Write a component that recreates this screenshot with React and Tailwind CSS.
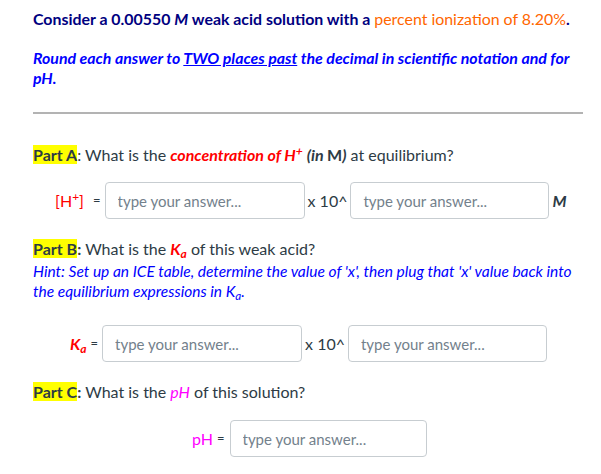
import React from 'react';

function Answer({ className = '' }) {
  return (
    <input
      type="text"
      placeholder="type your answer..."
      className={`h-[37px] rounded-[4px] border border-[#c7cdd1] bg-white px-3 text-[15px] text-[#2d3b45] placeholder:text-[#73818c] ${className}`}
    />
  );
}

function App() {
  return (
    <div className="min-h-[474px] bg-white pl-[33px] pr-[18px] pt-[9px] font-['Lato',sans-serif] text-[16px] text-[#2d3b45]">
      {/* Enunciado */}
      <p className="text-[15.9px] font-bold text-[#000080] leading-[20px]">
        Consider a 0.00550 <i>M</i> weak acid solution with a{' '}
        <span className="font-normal text-[#ff6600]">percent ionization of 8.20%</span>.
      </p>
      <p className="mt-[19px] text-[15.9px] font-bold italic text-[#0000ff] leading-[20px]">
        Round each answer to <u>TWO places past</u> the decimal in scientific notation and for pH.
      </p>

      <hr className="mt-[24px] border-t-2 border-[#b3b3b3]" />

      {/* Parte A */}
      <p className="mt-[31px] leading-[20px]">
        <span className="bg-[#ffff00] font-bold">Part A</span>: What is the{' '}
        <span className="font-bold italic text-[#ff0000]">concentration of H<sup>+</sup></span>{' '}
        <i className="font-bold">(in </i><b>M</b><i className="font-bold">)</i> at equilibrium?
      </p>
      <div className="mt-[17px] flex items-center pl-[22px]">
        <span className="text-[#ff0000]">[H<sup>+</sup>]</span>
        <span className="ml-[9px] mr-[4px] text-[13px]">=</span>
        <Answer className="w-[200px]" />
        <span className="mx-[3px]">x 10^</span>
        <Answer className="w-[199px]" />
        <span className="ml-[3px] font-bold italic">M</span>
      </div>

      {/* Parte B */}
      <p className="mt-[20px] leading-[20px]">
        <span className="bg-[#ffff00] font-bold">Part B</span>
        <b>:</b> What is the{' '}
        <span className="font-bold italic text-[#ff0000]">
          K<sub>a</sub>
        </span>{' '}
        of this weak acid?
      </p>
      <p className="mt-[2px] text-[15.5px] italic text-[#0000ff] leading-[20px]">
        Hint: Set up an ICE table, determine the value of 'x', then plug that 'x' value back into the
        equilibrium expressions in K<sub>a</sub>.
      </p>
      <div className="mt-[24px] flex items-center pl-[37px]">
        <span className="font-bold italic text-[#ff0000]">
          K<sub>a</sub>
        </span>
        <span className="ml-[4px] mr-[4px] text-[13px]">=</span>
        <Answer className="w-[200px]" />
        <span className="mx-[3px]">x 10^</span>
        <Answer className="w-[199px]" />
      </div>

      {/* Parte C */}
      <p className="mt-[20px] leading-[20px]">
        <span className="bg-[#ffff00] font-bold">Part C</span>
        <b>:</b> What is the <i className="text-[#ff00ff]">pH</i> of this solution?
      </p>
      <div className="mt-[18px] flex items-center pl-[159px]">
        <span className="text-[#ff00ff]">pH</span>
        <span className="ml-[4px] mr-[5px] text-[13px]">=</span>
        <Answer className="w-[197px]" />
      </div>
    </div>
  );
}

export default App;
